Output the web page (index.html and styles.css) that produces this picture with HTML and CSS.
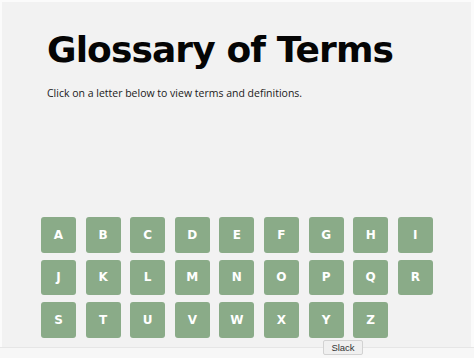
FILE: index.html
```html
<!DOCTYPE html>
<html>
<head>
<meta charset="utf-8">
<link rel="stylesheet" href="styles.css">
</head>
<body>
<div class="panel">
  <h1 class="title">Glossary of Terms</h1>
  <p class="intro">Click on a letter below to view terms and definitions.</p>
  <div class="letters">
    <button class="tile">A</button><button class="tile">B</button><button class="tile">C</button><button class="tile">D</button><button class="tile">E</button><button class="tile">F</button><button class="tile">G</button><button class="tile">H</button><button class="tile">I</button>
    <button class="tile">J</button><button class="tile">K</button><button class="tile">L</button><button class="tile">M</button><button class="tile">N</button><button class="tile">O</button><button class="tile">P</button><button class="tile">Q</button><button class="tile">R</button>
    <button class="tile">S</button><button class="tile">T</button><button class="tile">U</button><button class="tile">V</button><button class="tile">W</button><button class="tile">X</button><button class="tile">Y</button><button class="tile">Z</button>
  </div>
</div>
<div class="footer">
  <div class="tooltip">Slack</div>
</div>
</body>
</html>
```
FILE: styles.css
```css
html, body {
  margin: 0;
  padding: 0;
  background: #fbfbfb;
}
body {
  width: 474px;
  height: 358px;
  overflow: hidden;
  font-family: "Open Sans", sans-serif;
}
.panel {
  margin: 2px 3px 0 2px;
  height: 345px;
  background: #f2f2f2;
  box-sizing: border-box;
  padding: 26px 0 0 45px;
}
.title {
  margin: 0;
  font-family: "DejaVu Sans", sans-serif;
  font-weight: 700;
  font-size: 36px;
  line-height: 44px;
  color: #050505;
  letter-spacing: -0.9px;
}
.intro {
  margin: 14px 0 0 0;
  font-size: 10.5px;
  line-height: 14px;
  color: #1a1a1a;
}
.letters {
  margin-top: 117px;
  margin-left: -6px;
  display: grid;
  grid-template-columns: repeat(9, 35px);
  grid-auto-rows: 35.5px;
  column-gap: 9.6px;
  row-gap: 7px;
}
.tile {
  border: none;
  border-radius: 3px;
  background: #8aab88;
  color: #ffffff;
  font-family: "DejaVu Sans", sans-serif;
  font-weight: 700;
  font-size: 12px;
  padding: 0;
  margin: 0;
}
.footer {
  position: relative;
  height: 11px;
  border-top: 1px solid #e6e6e6;
  background: #f7f7f7;
}
.tooltip {
  position: absolute;
  left: 323px;
  top: -8px;
  width: 40px;
  height: 15px;
  box-sizing: border-box;
  border: 1px solid #d2d2d2;
  border-radius: 2px;
  background: #f0f0f0;
  color: #333;
  font-family: "Liberation Sans", sans-serif;
  font-size: 9.5px;
  line-height: 13px;
  text-align: center;
}
```
